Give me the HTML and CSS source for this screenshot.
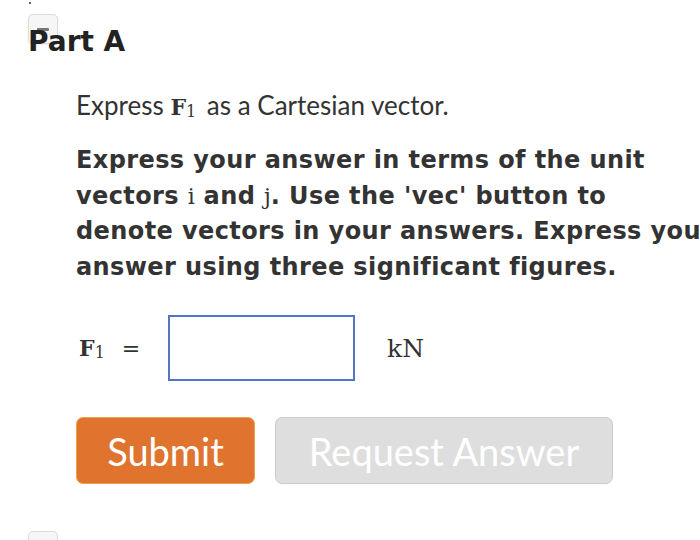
FILE: index.html
```html
<!DOCTYPE html>
<html>
<head>
  <title>Part A</title>
  <link rel="stylesheet" href="styles.css">
</head>
<body>
  <span class="speck"></span>
  <div class="part">
    <div class="toggle"><span class="minus"></span></div>
    <h2 class="part-title">Part A</h2>

    <div class="part-body">
      <p class="prompt">Express <span class="math bold">F</span><span class="math sub">1</span> as a Cartesian vector.</p>

      <p class="instructions">
        Express your answer in terms of the unit<br>
        vectors <span class="math">i</span> and <span class="math">j</span>. Use the 'vec' button to<br>
        denote vectors in your answers. Express your<br>
        answer using three significant figures.
      </p>

      <div class="answer-row">
        <span class="answer-label"><span class="math bold">F</span><span class="math sub">1</span> =</span>
        <input type="text" class="answer-box">
        <span class="unit">kN</span>
      </div>

      <div class="button-group">
        <button class="btn btn-submit">Submit</button>
        <button class="btn btn-request" disabled>Request Answer</button>
      </div>
    </div>
  </div>

  <div class="part next">
    <div class="toggle"></div>
  </div>
</body>
</html>
```

FILE: styles.css
```css
body {
  margin: 0;
  width: 700px;
  height: 540px;
  overflow: hidden;
  background-color: #fff;
  font-family: Lato, "Open Sans", sans-serif;
  color: #333;
}

.speck {
  display: block;
  width: 2px;
  height: 2px;
  margin: 2px 0 0 29px;
  background-color: #333;
  border-radius: 50%;
}

.part {
  position: relative;
  padding: 18px 0 0 28px;
}

.toggle {
  position: absolute;
  left: 28px;
  top: 10px;
  width: 28px;
  height: 28px;
  border: 1px solid #dcdcdc;
  border-radius: 5px;
  background-color: #f6f6f6;
  box-shadow: 0 1px 2px rgba(0, 0, 0, 0.08);
}

.minus {
  position: absolute;
  left: 8px;
  top: 13px;
  width: 12px;
  height: 3px;
  border-radius: 1px;
  background-color: #777;
}

.part-title {
  position: relative;
  margin: 0;
  font-family: "DejaVu Sans", sans-serif;
  font-size: 28px;
  line-height: 40px;
  font-weight: bold;
  color: #222;
}

.part-body {
  padding-left: 48px;
}

.math {
  font-family: "DejaVu Serif", "Liberation Serif", serif;
  font-weight: normal;
  letter-spacing: 0;
}

.math.bold {
  font-weight: bold;
}

.math.sub {
  font-size: 0.72em;
  vertical-align: -2px;
  margin-right: 4px;
}

.prompt {
  margin: 28px 0 0;
  font-size: 26px;
  line-height: 30px;
}

.prompt .math {
  font-size: 22px;
}

.prompt .math.sub {
  font-size: 16px;
}

.instructions {
  margin: 16px 0 0;
  font-family: "DejaVu Sans", sans-serif;
  font-size: 24px;
  line-height: 35.5px;
  letter-spacing: 0.4px;
  font-weight: bold;
  white-space: nowrap;
}

.instructions .math {
  font-size: 22px;
}

.answer-row {
  display: flex;
  align-items: center;
  margin-top: 30px;
}

.answer-label {
  width: 92px;
  padding-left: 3px;
  box-sizing: border-box;
  font-family: "DejaVu Serif", "Liberation Serif", serif;
  font-size: 22px;
}

.answer-label .math.sub {
  margin-right: 10px;
}

.answer-box {
  width: 187px;
  height: 66px;
  box-sizing: border-box;
  margin: 0;
  border: 2px solid #5576c4;
  border-radius: 0;
  outline: none;
}

.unit {
  margin-left: 32px;
  font-family: "DejaVu Serif", "Liberation Serif", serif;
  font-size: 25px;
}

.button-group {
  display: flex;
  gap: 20px;
  margin-top: 36px;
}

.btn {
  height: 67px;
  box-sizing: border-box;
  border-radius: 7px;
  font-family: Lato, "Open Sans", sans-serif;
  font-size: 38px;
  color: #fff;
  padding: 0;
}

.btn-submit {
  width: 179px;
  background-color: #e0742f;
  border: 1px solid #f0a04d;
}

.btn-request {
  width: 338px;
  background-color: #dedede;
  border: 1px solid #cccccc;
}

.part.next {
  padding: 0;
}

.part.next .toggle {
  top: 47px;
}
```
